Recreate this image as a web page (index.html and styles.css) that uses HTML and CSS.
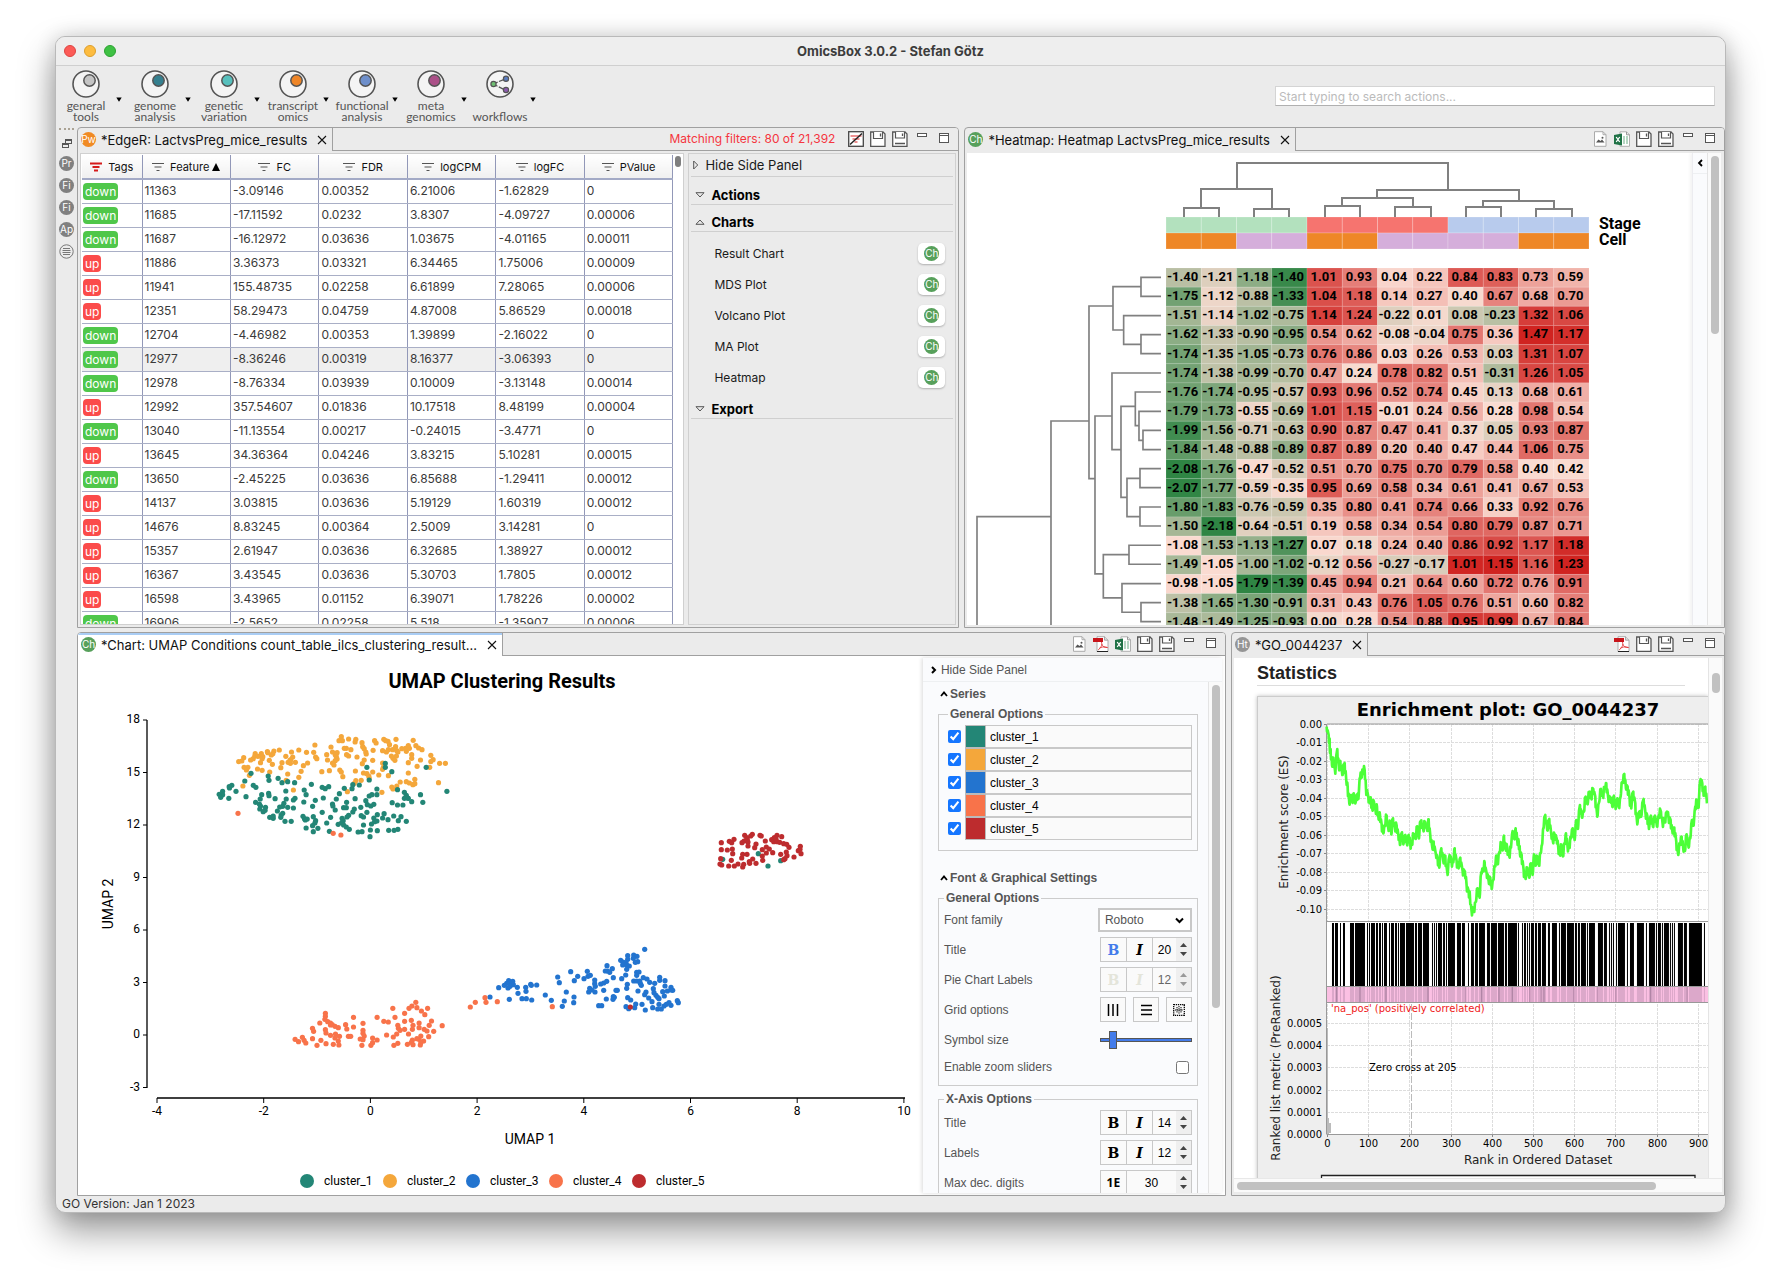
FILE: index.html
```html
<!DOCTYPE html>
<html lang="en">
<head>
<meta charset="utf-8">
<title>OmicsBox 3.0.2 - Stefan Götz</title>
<link rel="stylesheet" href="styles.css">
</head>
<body>
<svg class="defs" aria-hidden="true">
  <symbol id="i-save" viewBox="0 0 16 16"><path d="M.7 1H13l2 2v12.300H.7z" fill="#fff" stroke="#555" stroke-width="1.300"/><path d="M3.500 1v6.500h9V1" fill="#fff" stroke="#555" stroke-width="1.200"/><path d="M10.500 2.500v3" stroke="#555" stroke-width="1.300"/></symbol>
  <symbol id="i-saveas" viewBox="0 0 16 16"><path d="M.7 1H13l2 2v12.300H.7z" fill="#fff" stroke="#555" stroke-width="1.300"/><path d="M3.500 1v6h9V1" fill="#fff" stroke="#555" stroke-width="1.200"/><path d="M10.500 2.500v2.500" stroke="#555" stroke-width="1.300"/><path d="M3 12.500h10" stroke="#555" stroke-width="1.600"/></symbol>
  <symbol id="i-min" viewBox="0 0 16 16"><rect x="3.500" y="2.500" width="9" height="3" fill="#fff" stroke="#555"/></symbol>
  <symbol id="i-max" viewBox="0 0 16 16"><rect x="3.500" y="2.500" width="9" height="9" fill="#fff" stroke="#555"/><path d="M3 4.500h10" stroke="#555"/></symbol>
  <symbol id="i-nofilter" viewBox="0 0 16 16"><rect x=".7" y=".7" width="14.600" height="14.600" fill="#fff" stroke="#444" stroke-width="1.300"/><path d="M2.500 5h11M4.500 8h7M6.500 11h3" stroke="#d22" stroke-width="1.200"/><path d="M2 13.500L14 2.500" stroke="#222" stroke-width="1.500"/></symbol>
  <symbol id="i-image" viewBox="0 0 16 16"><path d="M2.500.7h8.500l3 3v11.600H2.500z" fill="#fff" stroke="#aaa"/><path d="M11 .7v3h3" fill="none" stroke="#aaa"/><path d="M4 11.500l2.500-3 2 1.500 1.500-1.500 2.500 3z" fill="#555"/><circle cx="10.500" cy="6.800" r="1" fill="#555"/></symbol>
  <symbol id="i-excel" viewBox="0 0 16 16"><path d="M6 .8h6.500l3 3v11.500H6z" fill="#fff" stroke="#b0b0b0"/><path d="M12.500.8v3h3" fill="none" stroke="#999"/><path d="M9 6h2m1 0h2M9 8h2m1 0h2M9 10h2m1 0h2M9 12h2m1 0h2" stroke="#6cae85" stroke-width="1.100"/><path d="M0 4l8-1.500v12L0 13z" fill="#1f7246"/><path d="M2.200 6l3.500 5M5.700 6l-3.500 5" stroke="#fff" stroke-width="1.300"/></symbol>
  <symbol id="i-pdf" viewBox="0 0 16 16"><path d="M4 .7h7.500l3.500 3.500v11.300H4z" fill="#fff" stroke="#999" stroke-width=".8"/><path d="M4 15.500h11" stroke="#222"/><path d="M11.500.7v3.500H15" fill="#ddd" stroke="#999" stroke-width=".8"/><path d="M0 2h10v4H0z" fill="#c8141a"/><path d="M8.500 6c1 3-1 6.500-3.500 8M8.800 8c.7 2.500 3 3.800 5.700 3.500M6 12.500c2-1.500 5-2.200 8.500-1" fill="none" stroke="#e0393a" stroke-width=".9"/></symbol>
  <symbol id="i-close" viewBox="0 0 10 10"><path d="M1 1l8 8M9 1L1 9" stroke="#111" stroke-width="1.100"/></symbol>
  <symbol id="i-filter" viewBox="0 0 12 10"><path d="M0 1.500h12M2.500 5h7M4.500 8.500h3" stroke="currentColor" stroke-width="1.200"/></symbol>
  <symbol id="i-filter-on" viewBox="0 0 12 10"><path d="M0 1.500h12M2.500 5h7M4 8.500h4" stroke="#d51c1c" stroke-width="2"/></symbol>
  <symbol id="i-spin" viewBox="0 0 15 23"><path d="M0 0h15v23H0z" fill="#efefef"/><path d="M4 9l3.500-4L11 9zM4 14l3.500 4 3.500-4z" fill="currentColor"/></symbol>
  <symbol id="i-up" viewBox="0 0 8 6"><path d="M1 5l3-3.500L7 5" fill="none" stroke="#000" stroke-width="1.800"/></symbol>
</svg>

<div class="window">
  <header class="titlebar">
    <span class="lamps"><i class="lamp red"></i><i class="lamp amber"></i><i class="lamp green"></i></span>
    <h1>OmicsBox 3.0.2 - Stefan Götz</h1>
  </header>

  <div class="toolbar">
    <nav class="tools" id="tools"></nav>
    <input class="search" type="text" aria-label="Search actions" placeholder="Start typing to search actions...">
  </div>

  <div class="workbench">
    <aside class="trim">
      <i class="grip"></i>
      <svg width="10" height="10" viewBox="0 0 10 10" fill="#ebebeb" stroke="#555"><rect x="3.500" y=".5" width="6" height="4"/><path d="M3.500 1.500h6"/><rect x=".5" y="4.500" width="6" height="4"/><path d="M.5 5.500h6"/></svg>
      <span class="dot">Pr</span><span class="dot">Fi</span><span class="dot">Fi</span><span class="dot">Ap</span>
      <svg width="15" height="15" viewBox="0 0 15 15" fill="none" stroke="#777"><circle cx="7.500" cy="7.500" r="6.700"/><path d="M4 4.500h7M3.500 6.500h8M3.500 8.500h8M4 10.500h7"/></svg>
    </aside>

    <main class="parts">
      <div class="parts-row upper">
        <section class="part part-table">
          <div class="tabs">
            <button class="tab" type="button"><span class="dot orange">Pw</span>*EdgeR: LactvsPreg_mice_results<svg class="x"><use href="#i-close"/></svg></button>
            <div class="part-tools">
              <span class="matching">Matching filters: 80 of 21,392</span>
              <svg><use href="#i-nofilter"/></svg><svg><use href="#i-save"/></svg><svg><use href="#i-saveas"/></svg><svg><use href="#i-min"/></svg><svg><use href="#i-max"/></svg>
            </div>
          </div>
          <div class="part-body split">
            <div class="table-box">
              <table class="results">
                <colgroup><col class="c-tag"><col><col><col><col><col><col></colgroup>
                <thead><tr>
                  <th><svg><use href="#i-filter-on"/></svg>Tags</th>
                  <th><svg><use href="#i-filter"/></svg>Feature<i class="sort"></i></th>
                  <th><svg><use href="#i-filter"/></svg>FC</th>
                  <th><svg><use href="#i-filter"/></svg>FDR</th>
                  <th><svg><use href="#i-filter"/></svg>logCPM</th>
                  <th><svg><use href="#i-filter"/></svg>logFC</th>
                  <th><svg><use href="#i-filter"/></svg>PValue</th>
                </tr></thead>
                <tbody id="rows"></tbody>
              </table>
              <div class="vbar"><i class="thumb dark"></i></div>
            </div>
            <aside class="side">
              <button class="side-top" type="button"><svg width="6" height="10" viewBox="0 0 6 10" fill="none" stroke="#555"><path d="M.7 1l4 4-4 4z"/></svg>Hide Side Panel</button>
              <h2><svg width="10" height="6" viewBox="0 0 10 6" fill="none" stroke="#555"><path d="M1 .7h8L5 5z"/></svg>Actions</h2>
              <h2><svg width="10" height="6" viewBox="0 0 10 6" fill="none" stroke="#555"><path d="M1 5.300h8L5 1z"/></svg>Charts</h2>
              <ul class="charts">
                <li>Result Chart<button type="button" aria-label="Result Chart"><span class="dot ch">Ch</span></button></li>
                <li>MDS Plot<button type="button" aria-label="MDS Plot"><span class="dot ch">Ch</span></button></li>
                <li>Volcano Plot<button type="button" aria-label="Volcano Plot"><span class="dot ch">Ch</span></button></li>
                <li>MA Plot<button type="button" aria-label="MA Plot"><span class="dot ch">Ch</span></button></li>
                <li>Heatmap<button type="button" aria-label="Heatmap"><span class="dot ch">Ch</span></button></li>
              </ul>
              <h2><svg width="10" height="6" viewBox="0 0 10 6" fill="none" stroke="#555"><path d="M1 .7h8L5 5z"/></svg>Export</h2>
            </aside>
          </div>
        </section>

        <section class="part part-heat">
          <div class="tabs">
            <button class="tab" type="button"><span class="dot ch">Ch</span>*Heatmap: Heatmap LactvsPreg_mice_results<svg class="x"><use href="#i-close"/></svg></button>
            <div class="part-tools">
              <svg><use href="#i-image"/></svg><svg><use href="#i-excel"/></svg><svg><use href="#i-save"/></svg><svg><use href="#i-saveas"/></svg><svg><use href="#i-min"/></svg><svg><use href="#i-max"/></svg>
            </div>
          </div>
          <div class="part-body heat-body">
            <svg class="plot" id="heatmap" role="img" aria-label="Heatmap"></svg>
            <div class="strip"><button type="button" aria-label="Show side panel"><svg width="6" height="8" viewBox="0 0 6 8"><path d="M5 1L2 4l3 3" fill="none" stroke="#000" stroke-width="1.800"/></svg></button></div>
            <div class="vbar pale"><i class="thumb t-heat"></i></div>
          </div>
        </section>
      </div>

      <div class="parts-row lower">
        <section class="part part-chart">
          <div class="tabs">
            <button class="tab active" type="button"><span class="dot ch">Ch</span>*Chart: UMAP Conditions count_table_ilcs_clustering_result...<svg class="x"><use href="#i-close"/></svg></button>
            <div class="part-tools">
              <svg><use href="#i-image"/></svg><svg><use href="#i-pdf"/></svg><svg><use href="#i-excel"/></svg><svg><use href="#i-save"/></svg><svg><use href="#i-saveas"/></svg><svg><use href="#i-min"/></svg><svg><use href="#i-max"/></svg>
            </div>
          </div>
          <div class="chart-body">
            <svg class="plot" id="umap" role="img" aria-label="UMAP Clustering Results"></svg>
            <aside class="options">
              <button class="options-top" type="button"><svg width="6" height="8" viewBox="0 0 6 8"><path d="M1 1l3 3-3 3" fill="none" stroke="#000" stroke-width="2"/></svg>Hide Side Panel</button>
              <div class="options-body">
                <form class="options-form">
                  <h2><svg width="8" height="6"><use href="#i-up"/></svg>Series</h2>
                  <fieldset class="series" id="series"><legend>General Options</legend></fieldset>
                  <h2><svg width="8" height="6"><use href="#i-up"/></svg>Font &amp; Graphical Settings</h2>
                  <fieldset class="general">
                    <legend>General Options</legend>
                    <div class="row first"><label for="font">Font family</label><span class="select"><select id="font"><option>Roboto</option></select><svg width="9" height="7" viewBox="0 0 9 7"><path d="M1 1.500l3.500 3.500L8 1.500" fill="none" stroke="#000" stroke-width="2"/></svg></span></div>
                    <div class="row"><label for="s1">Title</label><span class="group"><button type="button" class="bold on">B</button><button type="button" class="ital">I</button><input id="s1" type="number" value="20"><svg><use href="#i-spin"/></svg></span></div>
                    <div class="row"><label for="s2">Pie Chart Labels</label><span class="group off"><button type="button" class="bold" disabled>B</button><button type="button" class="ital" disabled>I</button><input id="s2" type="number" value="12" disabled><svg><use href="#i-spin"/></svg></span></div>
                    <div class="row"><span>Grid options</span><span class="grids">
                      <button type="button" aria-label="Vertical grid"><svg width="12" height="12" viewBox="0 0 12 12" stroke="#000" stroke-width="1.500"><path d="M1.500 0v12M6 0v12M10.500 0v12"/></svg></button>
                      <button type="button" aria-label="Horizontal grid"><svg width="12" height="12" viewBox="0 0 12 12" stroke="#000" stroke-width="1.500"><path d="M1 1.500h11M1 6h11M1 10.500h11"/></svg></button>
                      <button type="button" aria-label="Both grids"><svg width="12" height="12" viewBox="0 0 12 12" fill="none" stroke="#000"><rect x=".7" y=".7" width="10.600" height="10.600" stroke-dasharray="1.300 .8" stroke-width="1.300"/><path d="M6 2v8M2 6h8M4 3v6M8 3v6" stroke-dasharray="1.300 .8" stroke-width="1"/></svg></button></span></div>
                    <div class="row"><label for="sym">Symbol size</label><input id="sym" type="range" min="0" max="100" value="10"></div>
                    <div class="row short"><label for="zoom">Enable zoom sliders</label><input id="zoom" type="checkbox"></div>
                  </fieldset>
                  <fieldset>
                    <legend>X-Axis Options</legend>
                    <div class="row"><label for="s3">Title</label><span class="group"><button type="button" class="bold">B</button><button type="button" class="ital">I</button><input id="s3" type="number" value="14"><svg><use href="#i-spin"/></svg></span></div>
                    <div class="row"><label for="s4">Labels</label><span class="group"><button type="button" class="bold">B</button><button type="button" class="ital">I</button><input id="s4" type="number" value="12"><svg><use href="#i-spin"/></svg></span></div>
                    <div class="row"><label for="s5">Max dec. digits</label><span class="group"><button type="button" class="exp">1E</button><input class="wide" id="s5" type="number" value="30"><svg><use href="#i-spin"/></svg></span></div>
                  </fieldset>
                </form>
                <div class="vbar pale"><i class="thumb t-opt"></i></div>
              </div>
            </aside>
          </div>
        </section>

        <section class="part part-go">
          <div class="tabs">
            <button class="tab" type="button"><span class="dot grey">Ht</span>*GO_0044237<svg class="x"><use href="#i-close"/></svg></button>
            <div class="part-tools">
              <svg><use href="#i-pdf"/></svg><svg><use href="#i-save"/></svg><svg><use href="#i-saveas"/></svg><svg><use href="#i-min"/></svg><svg><use href="#i-max"/></svg>
            </div>
          </div>
          <div class="part-body go-body">
            <article class="report">
              <h2>Statistics</h2>
              <figure><svg id="enrich" role="img" aria-label="Enrichment plot"></svg></figure>
            </article>
            <div class="vbar pale"><i class="thumb t-go"></i></div>
            <div class="hbar"><i></i></div>
          </div>
        </section>
      </div>
    </main>
  </div>
  <footer class="status">GO Version: Jan 1 2023</footer>
</div>
<script src="app.js"></script>
</body>
</html>
```
FILE: styles.css
```css
* { box-sizing: border-box; }
body {
  margin: 0;
  height: 100vh;
  padding: 36px 55px 73px;
  background: #fff;
  font: 12px/16px Inter, "Liberation Sans", sans-serif;
  color: #1a1a1a;
}
button, input, select { font: inherit; color: inherit; margin: 0; }
button { border: 0; background: none; padding: 0; }
h1, h2, ul, figure { margin: 0; padding: 0; }
.defs { position: absolute; width: 0; height: 0; }

.window {
  height: 100%;
  display: flex;
  flex-direction: column;
  background: #ebebeb;
  border: 1px solid #b9b9b9;
  border-radius: 10px;
  overflow: hidden;
  box-shadow: 0 18px 36px rgba(0, 0, 0, .4), 0 0 20px rgba(0, 0, 0, .14);
}
.titlebar {
  flex: none;
  height: 29px;
  display: flex;
  align-items: center;
  background: #eee;
  border-bottom: 1px solid #cfcfcf;
}
.titlebar h1 { flex: 1; text-align: center; font-size: 13px; font-weight: 700; color: #3c3c3c; padding-right: 68px; }
.lamps { width: 68px; display: flex; gap: 8px; padding-left: 8px; }
.lamp { width: 12px; height: 12px; border-radius: 50%; border: 1px solid; }
.lamp.red { background: #fc5b57; border-color: #dd4440; }
.lamp.amber { background: #fdbc40; border-color: #dd9f2c; }
.lamp.green { background: #3fc144; border-color: #2da232; }

.toolbar { flex: none; height: 61px; display: flex; justify-content: space-between; }
.tools { display: flex; }
.tools button { width: 69px; height: 61px; display: flex; align-items: flex-start; padding-top: 4px; }
.tools .label { width: 60px; display: flex; flex-direction: column; align-items: center; font: 12px/11px Lato, sans-serif; color: #555; text-align: center; white-space: pre; }
.tools .label svg { margin-bottom: 2px; }
.tools .arrow { flex: none; margin-top: 27px; }
.search {
  width: 440px; height: 20px; margin: 20px 10px 0 0; padding: 0 3px;
  border: 1px solid #d4d4d4; border-bottom-color: #b0b0b0; background: #fff;
}
.search::placeholder { color: #bbb; opacity: 1; }

.workbench { flex: 1; min-height: 0; display: flex; }
.trim { width: 21px; flex: none; display: flex; flex-direction: column; align-items: center; gap: 7px; }
.trim .grip { width: 15px; margin: 1px 0 2px; border-top: 2px dotted #aaa294; }
.trim svg { flex: none; }
.dot {
  flex: none; width: 15px; height: 15px; border-radius: 50%;
  background: #808080; color: #fff; font: 10px/15px Inter, sans-serif; text-align: center;
}
.dot.orange { background: #f08a24; }
.dot.ch { background: #57a05b; }
.dot.grey { background: #959595; }

.parts { flex: 1; min-width: 0; display: flex; flex-direction: column; gap: 4px; }
.parts-row { display: flex; gap: 5px; min-height: 0; }
.upper { flex: 501 1 0; }
.lower { flex: 564 1 0; }
.part { min-width: 0; display: flex; flex-direction: column; border: 1px solid #a0a0a0; border-radius: 4px 4px 0 0; overflow: hidden; }
.part-table { flex: 882 1 0; }
.part-heat { flex: 760 1 0; }
.part-chart { flex: 1149 1 0; background: #fff; }
.part-go { flex: 493 1 0; }
.tabs { flex: none; height: 23px; display: flex; }
.tab { flex: none; display: flex; align-items: center; padding: 0 5px 0 3px; border-right: 1px solid #a0a0a0; font-size: 13px; color: #111; }
.tab .dot { margin-right: 5px; }
.tab .x { width: 10px; height: 10px; margin-left: 10px; }
.tab.active { background: #fff; box-shadow: inset 0 2px #a9cdf5; }
.part-tools { flex: 1; display: flex; align-items: center; justify-content: flex-end; gap: 6px; padding-right: 6px; border-bottom: 1px solid #a0a0a0; background: #ebebeb; }
.part-tools svg { width: 16px; height: 16px; flex: none; }
.matching { color: #f53540; margin-right: 7px; }
.part-body { flex: 1; min-height: 0; padding: 2px; display: flex; }
.split { gap: 4px; }

.table-box { flex: 1; min-width: 0; display: flex; background: #fff; border: 1px solid #d0d0d0; overflow: hidden; padding: 1px 0 0 1px; }
.results { flex: 1; border-collapse: collapse; table-layout: fixed; width: 100%; height: 1px; }
.results th {
  height: 24px; padding: 0; font-size: 11px; font-weight: 400; color: #111; text-align: center;
  background: linear-gradient(#fff, #f0f0f0); border-right: 1px solid #9298b8; border-bottom: 2px solid #a3aac6;
}
.results th svg { width: 12px; height: 10px; margin-right: 6px; vertical-align: -1px; color: #555; }
.results td { height: 24px; padding: 0 2px; border-right: 1px solid #9298b8; border-bottom: 1px solid #a9afc6; color: #3a3a3a; white-space: nowrap; }
.results tr.sel td { background: #efefef; }
.c-tag { width: 60px; }
.sort { display: inline-block; margin-left: 3px; border: 4px solid transparent; border-bottom: 8px solid #000; border-top: 0; }
.tag { display: inline-block; height: 17px; line-height: 17px; padding: 0 2px; margin-left: -1px; border-radius: 4px; color: #fff; vertical-align: middle; }
.tag.down { background: #4fc74a; }
.tag.up { background: #fb4b4a; }

.vbar { flex: none; width: 10px; padding: 1px 2px; }
.vbar .thumb { display: block; width: 6px; border-radius: 4px; }
.thumb.dark { height: 11px; background: #7f7f7f; }
.vbar.pale { width: 14px; padding: 3px; border-left: 1px solid #e4e4e4; background: #fafafa; }
.vbar.pale .thumb { width: 8px; background: #c1c1c1; }
.t-heat { height: 178px; }
.t-opt { height: 323px; }
.vbar.pale .t-go { height: 20px; margin-top: 12px; }

.side { flex: none; width: 268px; border: 1px solid #d0d0d0; padding: 0 2px; }
.side-top { width: 100%; height: 23px; display: flex; align-items: center; gap: 6px; padding-left: 2px; font-size: 13px; border-bottom: 1px solid #cfcfcf; }
.side h2 { height: 27px; padding: 8px 0 0 4px; display: flex; align-items: center; gap: 6px; font-size: 13px; line-height: 18px; font-weight: 700; color: #000; border-bottom: 1px solid #cfcfcf; }
.side-top + h2 { height: 28px; padding-top: 9px; }
.charts { list-style: none; padding: 6px 8px 0 23px; height: 160px; }
.charts li { height: 31px; display: flex; align-items: center; justify-content: space-between; }
.charts button { width: 27px; height: 21px; border-radius: 5px; background: #fff; display: flex; align-items: center; justify-content: center; box-shadow: 0 1px 2px rgba(0, 0, 0, .25); }

.plot { flex: 1; min-width: 0; height: 100%; background: #fff; }
.heat-body { padding-right: 3px; }
.strip { flex: none; width: 15px; background: #fafbfd; border-left: 1px solid #ececf0; box-shadow: -2px 0 3px rgba(0, 0, 0, .05); }
.strip button { width: 100%; height: 21px; display: flex; align-items: center; justify-content: center; border-bottom: 1px solid #eef0f2; }
.hm { font: bold 13px Roboto, sans-serif; text-anchor: middle; fill: #000; }
.hm-key { font: bold 16px Roboto, sans-serif; fill: #000; }
.tree { fill: none; stroke: #808080; stroke-width: 2; }
.tree.rows { stroke-width: 5; }

.chart-body { flex: 1; min-height: 0; display: flex; padding: 2px 3px 2px 1px; }
.um { font: 12px Roboto, sans-serif; fill: #000; }
.um-axis { font: 14px Roboto, sans-serif; fill: #000; text-anchor: middle; }
.um-title { font: bold 20px Roboto, sans-serif; fill: #000; text-anchor: middle; }
.mid { text-anchor: middle; }
.end { text-anchor: end; }

.options { flex: none; width: 299px; display: flex; flex-direction: column; background: #fafbfd; box-shadow: -1px 0 4px rgba(0, 0, 0, .15); color: #555; font: 12px/14px "Liberation Sans", Arial, sans-serif; }
.options-top { flex: none; height: 24px; display: flex; align-items: center; gap: 4px; padding-left: 8px; border-bottom: 1px solid #eef0f2; }
.options-body { flex: 1; min-height: 0; display: flex; overflow: hidden; }
.options-form { flex: 1; padding: 5px 10px 0 15px; }
.options h2 { height: 14px; margin: 0 0 6px 2px; display: flex; align-items: center; gap: 2px; font-size: 12px; line-height: 14px; }
.options fieldset { margin: 0 0 6px; padding: 4px 5px 8px; border: 1px solid #ccc; min-width: 0; }
.options legend { padding: 0 2px; font-weight: bold; }
.options .general { padding-top: 3px; }
.options .series { padding: 4px 5px 10px 9px; margin-bottom: 20px; }
.series div { height: 23px; display: flex; align-items: center; }
.series input[type=checkbox] { margin-right: 4px; }
.series i { width: 21px; height: 23px; border: 1px solid #bbb; }
.series input[type=text] { flex: 1; min-width: 0; height: 23px; padding: 0 4px; border: 1px solid #c8c8c8; border-left: 0; background: #fafafa; color: #000; }
.options input[type=checkbox] { flex: none; width: 13px; height: 13px; accent-color: #1576ff; }
.row { height: 25px; margin-bottom: 5px; display: flex; align-items: center; justify-content: space-between; }
.row.first { height: 24px; }
.row.short { height: 20px; margin-bottom: 0; padding-right: 3px; }
.select { position: relative; width: 94px; height: 24px; }
.select select { width: 100%; height: 24px; appearance: none; border: 2px solid #c8c8c8; background: #fff; padding: 0 5px; border-radius: 0; }
.select svg { position: absolute; right: 8px; top: 9px; pointer-events: none; }
.group { width: 92px; height: 25px; display: flex; border: 1px solid #c8c8c8; background: #fafafa; color: #000; }
.group button { width: 26px; border-right: 1px solid #c8c8c8; font: bold 14px/22px "DejaVu Serif", serif; }
.group .ital { font-style: italic; }
.group .on { color: #437ceb; }
.group .exp { font: bold 12px/22px "Noto Sans", sans-serif; }
.group input { flex: 1; min-width: 0; padding: 0; border: 0; background: none; text-align: center; appearance: textfield; }
.group input::-webkit-inner-spin-button { display: none; }
.group svg { flex: none; width: 15px; height: 23px; color: #444; }
.group.off button { color: #e4e5da; }
.group.off input { color: #666; }
.group.off svg { color: #999; }
.grids { width: 92px; display: flex; justify-content: space-between; }
.grids button { width: 26px; height: 25px; display: flex; align-items: center; justify-content: center; border: 1px solid #c8c8c8; background: #fafafa; }
input[type=range] { width: 92px; height: 18px; appearance: none; background: none; }
input[type=range]::-webkit-slider-runnable-track { height: 4px; background: #437ceb; border: 1px solid #555; }
input[type=range]::-webkit-slider-thumb { appearance: none; width: 8px; height: 18px; margin-top: -8px; background: #437ceb; border: 1px solid #555; }

.go-body { display: grid; grid-template-columns: minmax(0, 1fr) 14px; grid-template-rows: minmax(0, 1fr) 14px; padding-bottom: 3px; }
.report { background: #fff; overflow: hidden; padding: 6px 0 0 23px; }
.report h2 { height: 22px; margin-right: 23px; border-bottom: 1px solid #ddd; font: bold 18px/19px "Liberation Sans", Arial, sans-serif; color: #222; }
.report figure { margin-top: 10px; border: 1px solid #ccc; border-right: 0; background: #eee; box-shadow: 0 0 4px rgba(0, 0, 0, .25); }
.report svg { display: block; width: 100%; height: 520px; }
.hbar { grid-column: 1 / 3; background: #fafafa; border-top: 1px solid #e8e8e8; padding: 3px; }
.hbar i { display: block; width: 87%; height: 8px; border-radius: 4px; background: #c1c1c1; }
.dj { font: 10px "DejaVu Sans", sans-serif; fill: #000; }
.dj.red { fill: #f01818; }
.dj-axis { font: 12px "DejaVu Sans", sans-serif; fill: #222; text-anchor: middle; }
.dj-title { font: bold 18px "DejaVu Sans", sans-serif; text-anchor: middle; }
.grid { stroke: #ddd; stroke-dasharray: 3 1; fill: none; }

.status { flex: none; height: 16px; padding-left: 6px; font-size: 12px; line-height: 16px; color: #333; }
```
FILE: app.js
```
const $ = id => document.getElementById(id);
const txt = (x, y, cls, s) => `<text x="${x}" y="${y}" class="${cls}">${s}</text>`;

/* Main tool bar */
const tools = [
  ['general\ntools', '#c4c4c4'], ['genome\nanalysis', '#35808f'], ['genetic\nvariation', '#57c0bd'],
  ['transcript\nomics', '#ee8527'], ['functional\nanalysis', '#6e8fcb'], ['meta\ngenomics', '#ab5088'], ['\nworkflows', null]
];
$('tools').innerHTML = tools.map(([label, color]) => {
  const inner = color
    ? `<circle cx="17.500" cy="10.500" r="5.700" fill="${color}" stroke="#555" stroke-width="1.500"/>`
    : `<path d="M7 14L19 9M7 14l12 6" stroke="#555" stroke-width="1.300" stroke-dasharray="5 1.500"/><g stroke="#555" stroke-width="1.200"><circle cx="7.500" cy="14" r="2.600" fill="#6fbf73"/><circle cx="20" cy="8.800" r="2.600" fill="#5b7dc0"/><circle cx="20" cy="20" r="2.600" fill="#8d5bb0"/></g>`;
  return `<button type="button"><span class="label"><svg width="28" height="28" viewBox="0 0 28 28"><circle cx="14" cy="14" r="13" fill="#f4f4f4" stroke="#555" stroke-width="1.600"/>${inner}</svg>${label}</span><svg class="arrow" width="6" height="5" viewBox="0 0 6 5"><path d="M.3.500h5.400L3 4.800z"/></svg></button>`;
}).join('');

/* Results table */
const rows = `down 11363 -3.09146 0.00352 6.21006 -1.62829 0
down 11685 -17.11592 0.0232 3.8307 -4.09727 0.00006
down 11687 -16.12972 0.03636 1.03675 -4.01165 0.00011
up 11886 3.36373 0.03321 6.34465 1.75006 0.00009
up 11941 155.48735 0.02258 6.61899 7.28065 0.00006
up 12351 58.29473 0.04759 4.87008 5.86529 0.00018
down 12704 -4.46982 0.00353 1.39899 -2.16022 0
down 12977 -8.36246 0.00319 8.16377 -3.06393 0
down 12978 -8.76334 0.03939 0.10009 -3.13148 0.00014
up 12992 357.54607 0.01836 10.17518 8.48199 0.00004
down 13040 -11.13554 0.00217 -0.24015 -3.4771 0
up 13645 34.36364 0.04246 3.83215 5.10281 0.00015
down 13650 -2.45225 0.03636 6.85688 -1.29411 0.00012
up 14137 3.03815 0.03636 5.19129 1.60319 0.00012
up 14676 8.83245 0.00364 2.5009 3.14281 0
up 15357 2.61947 0.03636 6.32685 1.38927 0.00012
up 16367 3.43545 0.03636 5.30703 1.7805 0.00012
up 16598 3.43965 0.01152 6.39071 1.78226 0.00002
down 16906 -2.5652 0.02258 5.518 -1.35907 0.00006`.split('\n');
$('rows').innerHTML = rows.map(line => {
  const [tag, ...vals] = line.split(' ');
  return `<tr${vals[0] === '12977' ? ' class="sel"' : ''}><td><span class="tag ${tag}">${tag}</span></td>${vals.map(v => `<td>${v}</td>`).join('')}</tr>`;
}).join('');

/* Heatmap: each column has its own neutral value and spans */
const heat = `-1.40 -1.21 -1.18 -1.40 1.01 0.93 0.04 0.22 0.84 0.83 0.73 0.59
-1.75 -1.12 -0.88 -1.33 1.04 1.18 0.14 0.27 0.40 0.67 0.68 0.70
-1.51 -1.14 -1.02 -0.75 1.14 1.24 -0.22 0.01 0.08 -0.23 1.32 1.06
-1.62 -1.33 -0.90 -0.95 0.54 0.62 -0.08 -0.04 0.75 0.36 1.47 1.17
-1.74 -1.35 -1.05 -0.73 0.76 0.86 0.03 0.26 0.53 0.03 1.31 1.07
-1.74 -1.38 -0.99 -0.70 0.47 0.24 0.78 0.82 0.51 -0.31 1.26 1.05
-1.76 -1.74 -0.95 -0.57 0.93 0.96 0.52 0.74 0.45 0.13 0.68 0.61
-1.79 -1.73 -0.55 -0.69 1.01 1.15 -0.01 0.24 0.56 0.28 0.98 0.54
-1.99 -1.56 -0.71 -0.63 0.90 0.87 0.47 0.41 0.37 0.05 0.93 0.87
-1.84 -1.48 -0.88 -0.89 0.87 0.89 0.20 0.40 0.47 0.44 1.06 0.75
-2.08 -1.76 -0.47 -0.52 0.51 0.70 0.75 0.70 0.79 0.58 0.40 0.42
-2.07 -1.77 -0.59 -0.35 0.95 0.69 0.58 0.34 0.61 0.41 0.67 0.53
-1.80 -1.83 -0.76 -0.59 0.35 0.80 0.41 0.74 0.66 0.33 0.92 0.76
-1.50 -2.18 -0.64 -0.51 0.19 0.58 0.34 0.54 0.80 0.79 0.87 0.71
-1.08 -1.53 -1.13 -1.27 0.07 0.18 0.24 0.40 0.86 0.92 1.17 1.18
-1.49 -1.05 -1.00 -1.02 -0.12 0.56 -0.27 -0.17 1.01 1.15 1.16 1.23
-0.98 -1.05 -1.79 -1.39 0.45 0.94 0.21 0.64 0.60 0.72 0.76 0.91
-1.38 -1.65 -1.30 -0.91 0.31 0.43 0.76 1.05 0.76 0.51 0.60 0.82
-1.48 -1.49 -1.25 -0.93 0.00 0.28 0.54 0.88 0.95 0.99 0.67 0.84`.split('\n').map(r => r.split(' '));
const zero = [-1.08, -1.05, -.47, -.33, .05, .26, 0, .05, .42, .28, .4, .42];
const up = [5, 5, 5, 5, 1.3, 1.33, 1.33, 1.45, .6, .82, 1.07, .8];
const down = [1, 1.13, 1.32, 1.12, 1.9, 1.6, 1.6, 1.4, 1.5, 1.6, 1.6, 1.6];
const mix = (a, b, t) => `rgb(${a.map((v, i) => Math.round(v + (b[i] - v) * t))})`;
const shade = (v, c) => {
  const d = v - zero[c], base = [250, 219, 209];
  return d < 0 ? mix(base, [47, 133, 68], Math.min(1, -d / down[c])) : mix(base, [208, 35, 32], Math.min(1, d / up[c]));
};
const HX = 199, CW = 35.25, RH = 19.15;
let h = '';
const stage = i => i < 4 ? '#b3e1be' : i < 8 ? '#f6746f' : '#b8cbed';
const cell = i => [0, 1, 4, 5, 10, 11].includes(i) ? '#ee8727' : '#d5aedb';
for (let i = 0; i < 12; i++) {
  h += `<rect x="${HX + i * CW}" y="64" width="${CW}" height="16" fill="${stage(i)}" stroke="#fff" stroke-opacity=".2"/>`;
  h += `<rect x="${HX + i * CW}" y="80" width="${CW}" height="16" fill="${cell(i)}" stroke="#fff" stroke-opacity=".2"/>`;
}
heat.forEach((r, j) => r.forEach((v, i) => {
  h += `<rect x="${HX + i * CW}" y="${115 + j * RH}" width="${CW}" height="${RH}" fill="${shade(+v, i)}" stroke="#fff" stroke-opacity=".12"/>`;
  h += txt(HX + (i + .5) * CW - 1, Math.round(128 + j * RH), 'hm', v);
}));
h += txt(632, 76, 'hm-key', 'Stage') + txt(632, 92, 'hm-key', 'Cell');
h += `<path class="tree" d="M270 36V10H481V37M234 55V36H305V56M217 64V55H252V64M287 64V56H322V64M410 45V37H552V48M375 53V45H446V54M358 64V53H393V64M428 64V54H464V64M516 54V48H587V56M499 64V54H534V64M569 64V56H605V64"/>`;
h += `<g transform="translate(-7 -33) scale(.3333)"><path class="tree rows" d="M603 472H543V529H603M543 500H459V630H491M603 644H543V701H603M543 673H491V587H603M459 558H387V1076H405M603 759H456V989H483M603 816H526V917H537M603 874H537V961H549M603 931H549V989H603M526 859H483V1132H501M603 1046H540V1103H603M603 1161H540V1218H603M540 1075H501V1190H540M456 888H405V1362H430M603 1276H507V1333H603M507 1304H430V1434H486M603 1391H486V1477H543M603 1448H543V1505H603M387 903H273V1700M273 1190H51V1700"/></g>`;
$('heatmap').innerHTML = h;

/* UMAP scatter: points are grouped in tiles, each with a colour index, an origin and a scale */
const colors = ['#238676', '#f4a73b', '#2374cf', '#f8734a', '#bd2c2e'];
const tiles = [
  [1, -19, -32, 2.613, '735,332 729,344 738,344 754,339 773,340 771,348 789,350 791,362 795,368 799,378 800,384 822,344 826,351 846,340 851,344 857,346 861,356 878,340 877,362 923,343 930,359 937,366 946,371 910,359 903,367 893,368 913,367 905,376 869,371 880,374 883,378 858,371 853,378 843,374 818,373 708,363 666,357 663,379 644,379 624,372 605,378 573,372 559,375 542,377 543,380 556,383 552,387 526,383 510,383 509,390 526,390 530,392 528,398 517,391 505,398 498,402 480,395 475,405 467,407 481,424 491,424 487,432 516,429 528,433 548,438 495,448 478,480 524,410 547,403 555,415 580,410 577,425 590,391 608,393 603,401 596,409 602,412 615,409 601,403 636,419 647,411 630,436 624,454 595,444 591,463 610,492 668,393 671,398 697,386 699,402 712,378 724,380 719,386 722,392 724,399 719,404 712,411 716,417 684,437 704,434 731,432 735,438 739,452 772,435 790,413 795,402 776,393 754,390 749,386 748,367 743,367 760,371 817,403 843,411 845,424 843,430 817,438 802,443 793,441 807,450 808,456 833,447 858,449 787,463 773,464 769,472 751,497 841,499 866,390 870,397 875,403 879,390 919,386 919,397 910,410 942,402 933,421 910,441 927,460 905,467 913,471 922,476 927,473 889,468 880,480 867,483 870,489 969,388 975,401 969,407 966,424 992,412 1007,412 989,470'],
  [0, -19, -32, 2.613, '499,442 483,465 505,478 512,484 449,478 442,482 443,486 460,496 425,496 416,505 425,506 420,514 441,517 486,512 527,506 545,502 546,509 523,519 511,529 521,534 524,540 537,544 522,549 536,553 531,557 562,518 590,495 591,519 614,517 610,522 643,506 638,492 637,528 667,523 688,516 660,541 585,532 582,541 574,543 595,544 610,546 568,555 582,562 578,567 577,574 548,574 557,570 557,577 588,586 604,586 635,571 639,578 646,579 641,582 662,572 668,584 666,591 660,599 643,606 674,607 662,617 685,559 697,591 707,574 712,534 713,540 719,552 722,519 730,503 749,529 748,545 741,545 769,549 765,558 754,568 750,573 737,577 740,584 736,590 727,595 741,597 748,603 756,610 704,616 771,518 763,488 743,487 765,476 782,477 786,544 787,569 793,573 793,597 779,618 789,617 811,612 810,632 829,614 802,559 799,524 803,536 812,540 820,535 808,510 815,506 828,506 828,489 829,566 820,576 828,585 822,587 814,594 843,576 847,563 857,581 872,570 884,584 891,572 905,586 883,610 873,613 859,613 868,530 882,537 896,537 900,499 905,508 908,516 900,517 910,517 919,527 942,506 948,529 1011,496 957,424 850,412 850,424 802,424 867,437 808,462 544,450 546,463 570,457 580,470 595,467 613,470 657,475 685,484 693,488 702,482 882,491'],
  [3, -19, -32, 2.613, '465,562 714,622 734,627'],
  [0, 381, 163, 3, '788,115 895,98 924,135 962,119'],
  [4, 381, 163, 3, '784,65 784,86 782,113 780,129 785,132 802,87 817,84 818,98 808,61 822,55 815,65 806,135 823,135 814,118 834,129 845,111 848,100 861,100 848,138 851,130 854,43 860,50 877,40 872,45 846,65 852,60 864,63 862,56 864,75 884,80 888,69 900,43 904,45 916,60 907,86 919,78 928,84 919,96 907,105 908,118 888,127 869,127 868,122 878,114 938,95 951,43 965,47 943,50 935,56 941,62 951,62 959,64 948,54 971,68 980,70 987,79 962,100 979,93 981,104 971,116 1002,108 1015,89 1021,76 1023,98 1020,85 975,113'],
  [2, 381, 163, 3, '554,385 503,404 521,402 531,406 520,412 503,415 482,418 489,423 498,425 533,422 526,424 488,432 500,432 508,435 500,445 441,434 457,443 436,450 443,450 449,454 332,452 382,451 353,466 372,473 384,466 391,463 343,479 293,468 298,485 319,513 460,470 485,473 497,462 530,454 537,453 530,463 404,477 404,488 406,496 389,502 386,513 405,513 396,507 422,489 431,486 440,481 431,508 472,508 468,508 439,534 460,527 463,529 459,535 425,554 416,554 502,490 500,502 521,480 530,480 539,480 541,487 544,493 550,470 561,474 569,484 584,487 599,469 599,478 615,479 615,495 633,499 632,507 638,508 622,510 608,512 613,525 580,503 582,515 588,523 593,529 597,533 576,542 566,531 558,513 554,521 534,510 503,530 512,537 527,549 524,560 546,550 498,557 506,563 556,567 578,560 597,550 593,564 604,564 612,555 619,550 627,545 633,553 652,539 655,545 342,528 341,545 313,540 307,556 256,522 274,538 146,479 158,481 151,487 160,491 140,487 133,493 144,501 150,496 172,499 116,500 174,517 148,535 197,499 198,511 212,490 214,493 230,492 186,533 199,533 215,537 90,528'],
  [3, 381, 163, 3, '31,558 46,544 75,530 78,544 112,542 277,557'],
  [4, 381, 163, 3, '511,558'],
  [3, -19, 243, 1.782, '473,337 473,346 472,355 463,366 477,362 482,366 485,371 490,376 496,380 482,372 450,382 452,391 473,386 474,396 482,403 491,399 498,406 490,411 496,420 497,432 487,430 474,428 465,418 450,413 432,409 419,415 425,422 435,418 438,426 458,433 509,371 511,384 523,378 523,349 514,406 518,406 540,367 540,388 540,397 542,405 535,414 540,416 538,433 554,433 557,411 565,417 557,425 565,349 577,361 585,363 597,349 593,322 602,373 603,382 606,388 600,399 594,408 582,402 595,433 602,427 614,337 614,361 614,385 621,399 626,358 629,373 628,385 622,322 627,315 634,304 636,320 644,330 655,322 650,341 640,366 640,380 649,385 654,390 662,360 658,373 666,391 681,374 657,407 643,405 640,415 648,420 628,417 626,424 619,430 629,431 642,432 643,425 636,413']
];
let u = txt(423, 30, 'um-title', 'UMAP Clustering Results');
u += '<path d="M68 62V430M78 440H826" stroke="#000" stroke-width="1.300"/>';
for (let i = 0; i < 8; i++) {
  const x = 78 + i * 106.7, y = 62 + i * 52.5;
  u += `<path d="M64 ${y}h4M${x} 440v5" stroke="#000"/>`;
  u += txt(61, y + 3, 'um end', 18 - i * 3) + txt(x, 457, 'um mid', -4 + i * 2);
}
u += txt(451, 486, 'um-axis', 'UMAP 1') + '<text transform="translate(34 246) rotate(-90)" class="um-axis">UMAP 2</text>';
tiles.forEach(([c, ox, oy, sx, pts]) => {
  u += `<g fill="${colors[c]}">` + pts.split(' ').map(p => {
    const [x, y] = p.split(',');
    return `<circle cx="${(ox + x / sx).toFixed(1)}" cy="${(oy + y / 3).toFixed(1)}" r="2.600"/>`;
  }).join('') + '</g>';
});
colors.forEach((c, i) => {
  u += `<circle cx="${228 + i * 83}" cy="523" r="7" fill="${c}"/>` + txt(245 + i * 83, 527, 'um', 'cluster_' + (i + 1));
});
$('umap').innerHTML = u;

/* Series list */
$('series').insertAdjacentHTML('beforeend', colors.map((c, i) =>
  `<div><input type="checkbox" checked aria-label="Show cluster_${i + 1}"><i style="background:${c}"></i><input type="text" aria-label="Series name ${i + 1}" value="cluster_${i + 1}"></div>`).join(''));

/* Enrichment plot */
const PX = 69, PY = 27;
let e = `<path d="M${PX} ${PY}H460V437H${PX}z" fill="#fff"/>`;
e += txt(250, 19, 'dj-title', 'Enrichment plot: GO_0044237');
for (let i = 0; i <= 10; i++) {
  const y = Math.round(PY + i * 18.47) + .5;
  e += `<path class="grid" d="M${PX} ${y}H460"/><path d="M${PX - 3} ${y}h3" stroke="#888"/>` + txt(PX - 5, y + 3, 'dj end', (i ? '-' : '') + (i / 100).toFixed(2));
}
for (let i = 0; i <= 5; i++) {
  const y = Math.round(437 - i * 22.2) + .5;
  e += `<path class="grid" d="M${PX} ${y}H460"/>` + txt(PX - 5, y + 3, 'dj end', '0.000' + i);
}
for (let i = 0; i < 10; i++) {
  const x = Math.round(PX + i * 41.2) + .5;
  e += `<path class="grid" d="M${x} ${PY}V224M${x} 307V437"/><path d="M${x} 437v3" stroke="#888"/>` + txt(x, 450, 'dj mid', i * 100);
}
const bars = '336-342 345-354 360-363 369-375 390-402 405-435 441-444 447-450 453-465 468-474 477-483 486-489 492-501 507-510 513-522 525-531 534-537 540-555 558-582 585-591 594-606 609-627 636-639 642-645 648-651 654-666 669-675 678-681 684-705 711-723 726-735 744-747 753-762 765-774 777-795 801-810 813-831 834-852 855-861 864-891 894-897 906-909 912-918 921-924 927-930 933-942 945-951 954-963 966-978 984-990 996-1011 1017-1020 1023-1038 1041-1062 1065-1071 1074-1080 1083-1098 1101-1104 1107-1125 1134-1149 1152-1161 1167-1170 1173-1176 1179-1182 1188-1191 1194-1215 1221-1224 1230-1242 1251-1272 1278-1281 1287-1305 1308-1311 1314-1323 1326-1329 1332-1347 1350-1353 1356-1359 1362-1365 1374-1389 1392-1401 1407-1446 1452-1455';
e += `<rect x="${PX}" y="290" width="391" height="16" fill="#fbc0e3"/>`;
e += `<g transform="translate(-38 0) scale(.3333 1)">`;
bars.split(' ').forEach(b => {
  const [a, z] = b.split('-').map(Number);
  e += `<rect x="${a}" y="226" width="${z - a}" height="64"/><rect x="${a}" y="290" width="${z - a}" height="16" fill="#806080" opacity=".25"/>`;
});
[348, 418, 496, 622, 735, 783, 835, 875, 928, 962, 970, 1060, 1130, 1185, 1290, 1400].forEach(x => { e += `<rect x="${x}" y="290" width="4" height="16" fill="#705070" opacity=".4"/>`; });
e += '</g>';
e += `<path d="M${PX} 224.500H460M${PX} 289.500H460M${PX} 305.500H460M${PX - .5} ${PY}V437.500M${PX} ${PY}H460M${PX} 437.500H460" stroke="#999" fill="none"/>`;
e += `<path d="M153.500 307V437" stroke="#bbb" stroke-dasharray="7 2"/><path d="M69 331h1v90h1v15h2v-10h-2v11h-2z" fill="#bbb"/>`;
const curve = '320,305 326,330 329,365 332,385 336,420 340,398 346,446 352,372 357,432 361,408 367,450 374,414 379,468 383,485 388,535 393,510 397,530 401,505 406,535 411,508 415,522 419,460 424,452 429,434 434,436 438,490 445,515 449,530 453,528 457,552 462,530 467,560 471,545 476,583 480,570 485,598 490,625 495,600 500,572 506,618 510,590 514,628 519,580 525,610 530,602 535,628 540,660 546,622 550,658 556,630 561,658 566,630 571,660 576,656 582,628 587,642 592,604 597,640 604,586 610,615 616,592 622,618 626,583 631,632 637,668 641,650 648,690 653,700 658,728 664,670 670,708 676,692 683,750 689,690 695,714 700,712 704,670 710,708 716,730 721,698 728,738 735,740 740,782 746,798 750,818 755,860 762,858 768,830 773,790 779,818 784,742 790,735 794,712 800,745 806,768 811,758 815,792 820,765 825,722 829,692 833,718 839,680 844,655 848,676 852,632 857,672 862,668 868,695 873,668 878,618 883,642 887,610 892,648 896,648 900,688 905,690 911,735 917,762 922,728 928,758 933,715 938,750 942,688 947,722 953,695 957,722 962,685 966,660 970,610 976,570 982,616 988,582 994,628 999,650 1004,628 1010,640 1015,668 1020,690 1024,660 1029,694 1034,655 1038,625 1043,668 1048,665 1053,640 1058,610 1064,645 1069,585 1074,612 1080,540 1086,578 1092,560 1097,515 1103,538 1109,500 1114,520 1120,492 1126,515 1132,575 1138,530 1143,492 1149,515 1155,490 1159,475 1165,520 1172,518 1177,545 1182,512 1187,552 1192,520 1197,548 1202,515 1208,470 1213,447 1218,490 1223,485 1229,520 1234,550 1240,500 1246,535 1252,598 1258,560 1264,575 1271,522 1277,568 1282,572 1287,612 1293,572 1299,605 1305,572 1311,605 1317,570 1323,560 1328,596 1335,590 1341,560 1346,580 1352,585 1358,625 1363,608 1369,650 1375,690 1380,655 1385,635 1390,672 1395,678 1400,628 1406,668 1411,640 1416,585 1421,602 1426,545 1431,532 1436,548 1442,462 1447,475 1451,512 1456,485 1461,535'.split(' ').map(p => p.split(',').map(Number));
/* the running sum steps up and down between the turning points */
const steps = curve.flatMap(([x, y], i) => {
  const n = curve[i + 1];
  return n ? [[x, y], [x + 1, (2 * y + n[1]) / 3 + (i % 3 ? 12 : 6)], [x + 3, (y + 2 * n[1]) / 3 - (i % 2 ? 12 : 6)]] : [[x, y]];
}).map(p => p.map(Math.round).join()).join(' ');
e += `<g transform="translate(-38 -72) scale(.3333)"><polyline points="${steps}" fill="none" stroke="#4cff38" stroke-width="8" stroke-linejoin="round"/></g>`;
e += txt(73, 315, 'dj red', "'na_pos' (positively correlated)") + txt(111, 374, 'dj', 'Zero cross at 205');
e += txt(280, 467, 'dj-axis', 'Rank in Ordered Dataset');
e += '<text transform="translate(30 125) rotate(-90)" class="dj-axis">Enrichment score (ES)</text>';
e += '<text transform="translate(22 371) rotate(-90)" class="dj-axis">Ranked list metric (PreRanked)</text>';
e += '<path d="M63.500 540V478.500H437V540" fill="#fff" stroke="#222" stroke-width="1.300"/>';
$('enrich').innerHTML = e;
```
